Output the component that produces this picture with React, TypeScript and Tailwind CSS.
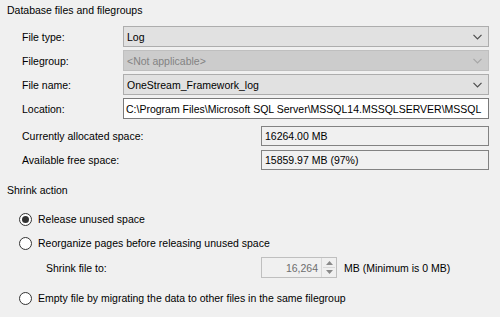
import React from 'react'

const FONT = { fontFamily: '"Liberation Sans", Arial, sans-serif' }

function Chevron({ disabled }: { disabled?: boolean }) {
  return (
    <svg width="9" height="6" viewBox="0 0 9 6" className="shrink-0">
      <path d="M0.5 0.8 L4.5 4.8 L8.5 0.8" fill="none" stroke={disabled ? '#a6a6a6' : '#4d4d4d'} strokeWidth="1.2" />
    </svg>
  )
}

function Combo({ value, disabled }: { value: string; disabled?: boolean }) {
  return (
    <div
      className={
        disabled
          ? 'flex h-[21px] w-[366px] items-center justify-between border border-[#bfbfbf] bg-[#cccccc] pl-[3px] pr-[6px] text-[#838383]'
          : 'flex h-[21px] w-[366px] items-center justify-between border border-[#adadad] bg-[#e1e1e1] pl-[3px] pr-[6px] text-black'
      }
    >
      <span className="whitespace-nowrap">{value}</span>
      <Chevron disabled={disabled} />
    </div>
  )
}

function FieldRow({ label, children }: { label: string; children: React.ReactNode }) {
  return (
    <div className="flex h-[21px] items-center">
      <div className="w-[123px] shrink-0 pl-[22px] whitespace-nowrap">{label}</div>
      {children}
    </div>
  )
}

function Radio({ checked, label }: { checked?: boolean; label: string }) {
  return (
    <div className="flex h-[16px] items-center pl-[19px]">
      <div className="flex h-[13px] w-[13px] items-center justify-center rounded-full border border-[#333333] bg-white">
        {checked && <div className="h-[7px] w-[7px] rounded-full bg-[#333333]" />}
      </div>
      <span className="ml-[6px] whitespace-nowrap">{label}</span>
    </div>
  )
}

function SpinBox({ value }: { value: string }) {
  return (
    <div className="flex h-[21px] w-[76px] shrink-0 items-stretch border border-[#bfbfbf] bg-[#f0f0f0]">
      <div className="flex flex-1 items-center justify-end pr-[3px] text-[#6d6d6d]">{value}</div>
      <div className="flex w-[15px] flex-col border-l border-[#d9d9d9] py-[1px]">
        <div className="flex flex-1 items-center justify-center">
          <svg width="7" height="4" viewBox="0 0 7 4">
            <path d="M0 4 L3.5 0 L7 4 Z" fill="#8a8a8a" />
          </svg>
        </div>
        <div className="mx-[1px] h-px bg-[#d9d9d9]" />
        <div className="flex flex-1 items-center justify-center">
          <svg width="7" height="4" viewBox="0 0 7 4">
            <path d="M0 0 L3.5 4 L7 0 Z" fill="#8a8a8a" />
          </svg>
        </div>
      </div>
    </div>
  )
}

export default function App() {
  return (
    <div className="h-[317px] w-[500px] overflow-hidden bg-[#f0f0f0] text-[10.5px] leading-[14px] text-black" style={FONT}>
      <div className="pl-[7px] pt-[3px]">Database files and filegroups</div>

      <div className="mt-[9px] flex flex-col gap-[3px]">
        <FieldRow label="File type:">
          <Combo value="Log" />
        </FieldRow>
        <FieldRow label="Filegroup:">
          <Combo value="<Not applicable>" disabled />
        </FieldRow>
        <FieldRow label="File name:">
          <Combo value="OneStream_Framework_log" />
        </FieldRow>
        <FieldRow label="Location:">
          <div className="flex h-[21px] w-[366px] items-center overflow-hidden border border-[#7a7a7a] bg-white pl-[2px]">
            <span className="whitespace-nowrap">C:\Program Files\Microsoft SQL Server\MSSQL14.MSSQLSERVER\MSSQL</span>
          </div>
        </FieldRow>
      </div>

      <div className="mt-[7px] flex flex-col gap-[4px]">
        <div className="flex h-[20px] items-center">
          <div className="w-[261px] shrink-0 pl-[22px]">Currently allocated space:</div>
          <div className="flex h-[20px] w-[228px] items-center border border-[#828282] pl-[3px]">16264.00 MB</div>
        </div>
        <div className="flex h-[20px] items-center">
          <div className="w-[261px] shrink-0 pl-[22px]">Available free space:</div>
          <div className="flex h-[20px] w-[228px] items-center border border-[#828282] pl-[3px]">15859.97 MB (97%)</div>
        </div>
      </div>

      <div className="mt-[13px] pl-[7px]">Shrink action</div>

      <div className="mt-[14px] flex flex-col">
        <Radio checked label="Release unused space" />
        <div className="mt-[8px]">
          <Radio label="Reorganize pages before releasing unused space" />
        </div>
        <div className="mt-[6px] flex h-[21px] items-center">
          <div className="w-[261px] shrink-0 pl-[46px]">Shrink file to:</div>
          <SpinBox value="16,264" />
          <span className="ml-[7px]">MB (Minimum is 0 MB)</span>
        </div>
        <div className="mt-[12px]">
          <Radio label="Empty file by migrating the data to other files in the same filegroup" />
        </div>
      </div>
    </div>
  )
}
